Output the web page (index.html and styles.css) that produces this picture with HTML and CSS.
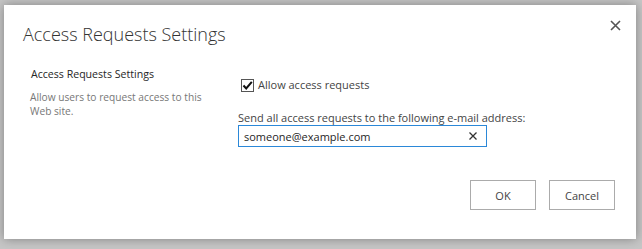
FILE: index.html
```html
<!DOCTYPE html>
<html>
<head>
<meta charset="utf-8">
<link rel="stylesheet" href="styles.css">
</head>
<body>
<div class="dialog">
  <div class="header">
    <h1 class="title">Access Requests Settings</h1>
    <button class="close" aria-label="Close">
      <svg width="11" height="11" viewBox="0 0 11 11"><path d="M1 1L10 10M10 1L1 10" stroke="#555" stroke-width="1.6" fill="none"/></svg>
    </button>
  </div>
  <div class="body">
    <div class="section-info">
      <div class="section-title">Access Requests Settings</div>
      <div class="section-desc">Allow users to request access to this Web site.</div>
    </div>
    <div class="section-controls">
      <label class="check-row">
        <span class="checkbox">
          <svg width="11" height="11" viewBox="0 0 11 11"><path d="M1.5 5.5L4.2 8.5L9.8 1.8" stroke="#111" stroke-width="2" fill="none"/></svg>
        </span>
        <span class="check-label">Allow access requests</span>
      </label>
      <div class="email-label">Send all access requests to the following e-mail address:</div>
      <div class="input">
        <span class="input-text">someone@example.com</span>
        <svg class="clear" width="8" height="8" viewBox="0 0 8 8"><path d="M0.5 0.5L7.5 7.5M7.5 0.5L0.5 7.5" stroke="#333" stroke-width="1.3" fill="none"/></svg>
      </div>
    </div>
  </div>
  <div class="footer">
    <button class="btn">OK</button>
    <button class="btn">Cancel</button>
  </div>
</div>
</body>
</html>
```
FILE: styles.css
```css
html, body {
  margin: 0;
  padding: 0;
}
body {
  width: 642px;
  height: 249px;
  background: #c6c6c6;
  font-family: "Open Sans", "Noto Sans", sans-serif;
  overflow: hidden;
}
.dialog {
  box-sizing: border-box;
  margin: 5px 0 0 4px;
  width: 632px;
  height: 234px;
  background: #fff;
  box-shadow: 0 0 10px rgba(0, 0, 0, 0.35);
  display: flex;
  flex-direction: column;
}
.header {
  display: flex;
  justify-content: space-between;
  align-items: flex-start;
  padding: 17px 14px 0 19px;
}
.title {
  margin: 0;
  font-weight: 300;
  font-size: 18px;
  color: #333;
  line-height: 24px;
}
.close {
  border: 0;
  background: none;
  padding: 0;
  margin-top: -3px;
  width: 13px;
  height: 13px;
  display: flex;
  align-items: center;
  justify-content: center;
}
.body {
  display: flex;
  padding: 20px 0 0 26px;
}
.section-info {
  width: 208px;
}
.section-title {
  font-size: 10.6px;
  color: #262626;
  line-height: 16px;
  padding-left: 1px;
}
.section-desc {
  margin-top: 8px;
  font-size: 10.2px;
  color: #777;
  line-height: 14px;
  width: 180px;
}
.section-controls {
  padding-top: 11px;
}
.check-row {
  display: flex;
  align-items: center;
  gap: 4px;
  padding-left: 3px;
}
.checkbox {
  box-sizing: border-box;
  width: 13px;
  height: 13px;
  border: 1px solid #555;
  display: flex;
  align-items: center;
  justify-content: center;
}
.check-label {
  font-size: 11px;
  color: #444;
  line-height: 16px;
}
.email-label {
  margin-top: 17px;
  font-size: 11px;
  color: #444;
  line-height: 16px;
}
.input {
  box-sizing: border-box;
  width: 249px;
  height: 22px;
  border: 1px solid #2b88d8;
  display: flex;
  align-items: center;
  justify-content: space-between;
  padding: 0 9px 0 5px;
  margin-top: -1px;
}
.input-text {
  font-size: 11px;
  color: #262626;
}
.footer {
  display: flex;
  justify-content: flex-end;
  gap: 13px;
  padding: 0 21px 0 0;
  margin-top: auto;
  margin-bottom: 29px;
}
.btn {
  box-sizing: border-box;
  width: 66px;
  height: 30px;
  background: #fff;
  border: 1px solid #ababab;
  font-family: "Open Sans", "Noto Sans", sans-serif;
  font-size: 11px;
  color: #444;
  padding: 0;
}
```
